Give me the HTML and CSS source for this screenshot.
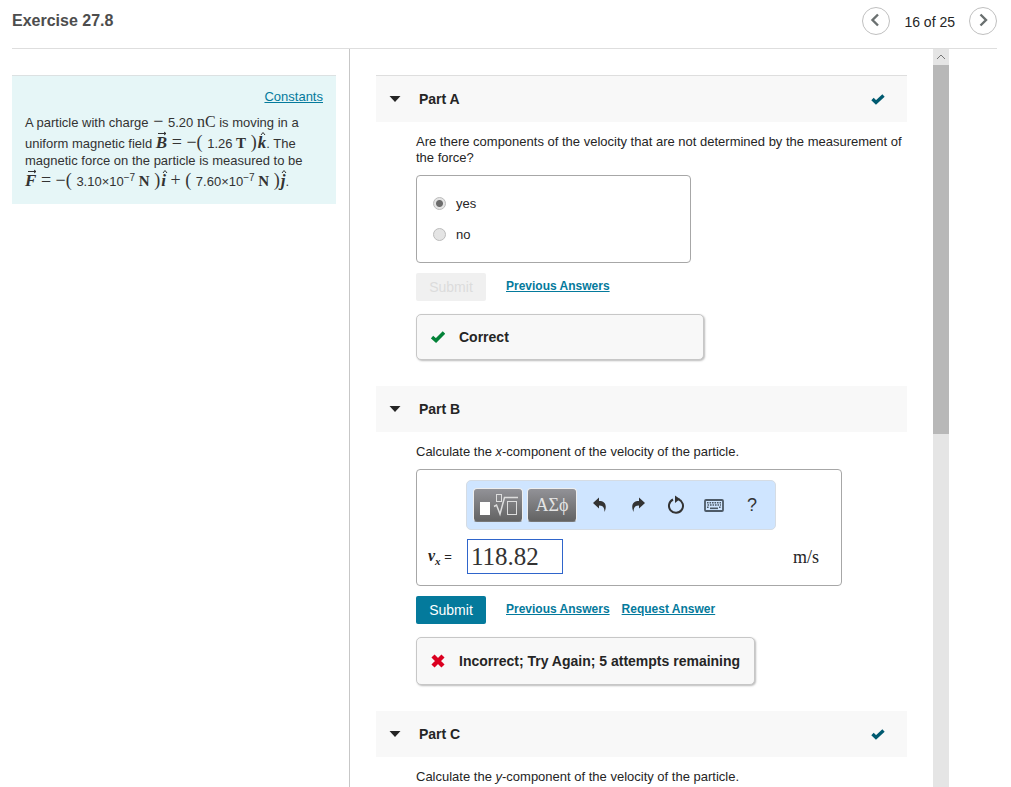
FILE: index.html
```html
<!DOCTYPE html>
<html lang="en">
<head>
  <meta charset="utf-8">
  <title>Exercise 27.8</title>
  <link rel="stylesheet" href="styles.css">
</head>
<body>
  <header class="top-bar">
    <h1>Exercise 27.8</h1>
    <nav class="pager">
      <button class="round" aria-label="Previous item">
        <svg width="28" height="28" viewBox="0 0 28 28"><path d="M16 7.500L10.500 13L16 18.500"/></svg>
      </button>
      <span>16 of 25</span>
      <button class="round" aria-label="Next item">
        <svg width="28" height="28" viewBox="0 0 28 28"><path d="M11.500 7.500L17 13L11.500 18.500"/></svg>
      </button>
    </nav>
  </header>

  <div class="container">
    <aside class="left">
      <div class="problem">
        <a class="constants" href="#">Constants</a>
        <div class="line">A particle with charge <span class="math">&minus;</span> 5.20 <span class="unit">nC</span> is moving in a</div>
        <div class="line tall">uniform magnetic field <span class="vec">B<svg width="10" height="5" viewBox="0 0 10 5"><path d="M1 2.500H9M7 1L9 2.500L7 4"/></svg></span> <span class="math">= &minus;(</span> 1.26 <span class="unit heavy">T</span> <span class="math">)</span><span class="vec">k<svg width="10" height="5" viewBox="0 0 10 5"><path d="M3 4L5 1.500L7 4"/></svg></span>. The</div>
        <div class="line">magnetic force on the particle is measured to be</div>
        <div class="line tall"><span class="vec">F<svg width="10" height="5" viewBox="0 0 10 5"><path d="M1 2.500H9M7 1L9 2.500L7 4"/></svg></span> <span class="math">= &minus;(</span> 3.10&times;10<sup>&minus;7</sup> <span class="unit heavy">N</span> <span class="math">)</span><span class="vec">i<svg width="10" height="5" viewBox="0 0 10 5"><path d="M3 4L5 1.500L7 4"/></svg></span> <span class="math">+ (</span> 7.60&times;10<sup>&minus;7</sup> <span class="unit heavy">N</span> <span class="math">)</span><span class="vec">j<svg width="10" height="5" viewBox="0 0 10 5"><path d="M3 4L5 1.500L7 4"/></svg></span>.</div>
      </div>
    </aside>

    <main class="right">
      <section class="part">
        <div class="part-header first">
          <svg class="caret" width="12" height="6" viewBox="0 0 12 6"><path d="M0.500 0H11.500L6 6Z"/></svg>
          <h2>Part A</h2>
          <svg class="done" width="14" height="11" viewBox="0 0 14 11"><path d="M1.500 5L5 8.500L12.500 1.500"/></svg>
        </div>
        <div class="part-body">
          <p>Are there components of the velocity that are not determined by the measurement of the force?</p>
          <div class="box choices">
            <label><input type="radio" name="partA" checked disabled> yes</label>
            <label><input type="radio" name="partA" disabled> no</label>
          </div>
          <div class="actions">
            <button class="submit" disabled>Submit</button>
            <a href="#">Previous Answers</a>
          </div>
          <div class="feedback correct">
            <svg width="14" height="12" viewBox="0 0 14 12"><path d="M1 6L5 9.500L13 1.500"/></svg>
            <span>Correct</span>
          </div>
        </div>
      </section>

      <section class="part">
        <div class="part-header">
          <svg class="caret" width="12" height="6" viewBox="0 0 12 6"><path d="M0.500 0H11.500L6 6Z"/></svg>
          <h2>Part B</h2>
        </div>
        <div class="part-body">
          <p>Calculate the <i>x</i>-component of the velocity of the particle.</p>
          <div class="box answer">
            <div class="toolbar">
              <button class="key" aria-label="Templates">
                <svg width="40" height="27" viewBox="0 0 40 27" fill="none" stroke="#ddd">
                  <rect x="2" y="10" width="10" height="13" fill="#fff" stroke="none"/>
                  <rect x="18.500" y="2.500" width="5" height="7"/>
                  <path d="M16 14.500L18.500 13L22 22L26.500 5.500H40" stroke-width="1.500"/>
                  <rect x="29.500" y="9.500" width="9" height="13"/>
                </svg>
              </button>
              <button class="key">&Alpha;&Sigma;&#981;</button>
              <button class="tool" aria-label="Undo">
                <svg width="16" height="16" viewBox="0 0 16 16"><path d="M1 6L7 0.500V4C13 4 15.500 8 12.500 15C12.500 10.500 11 8.500 7 8.500V11.500Z"/></svg>
              </button>
              <button class="tool" aria-label="Redo">
                <svg width="16" height="16" viewBox="0 0 16 16"><path d="M15 6L9 0.500V4C3 4 0.500 8 3.500 15C3.500 10.500 5 8.500 9 8.500V11.500Z"/></svg>
              </button>
              <button class="tool" aria-label="Reset">
                <svg width="18" height="20" viewBox="0 0 18 20"><path d="M11.500 4.300A7 7 0 1 1 6 4.500" fill="none" stroke="#333" stroke-width="2"/><path d="M8 0.500L13 4L8 8Z"/></svg>
              </button>
              <button class="tool keyboard" aria-label="Keyboard shortcuts">
                <svg width="20" height="13" viewBox="0 0 20 13" fill="none" stroke="#4d5a67"><rect x="1" y="1" width="18" height="11" rx="1" stroke-width="1.800"/><path d="M3 3.700H17M3.500 6H17M3 8.300H5M15 8.300H17" stroke-width="1.600" stroke-dasharray="1.600 0.900"/><path d="M6 9.300H14" stroke-width="1.600"/></svg>
              </button>
              <button class="tool">?</button>
            </div>
            <div class="entry">
              <label for="vx"><span class="var">v<sub>x</sub></span> =</label>
              <input type="text" id="vx" value="118.82">
              <span class="entry-unit">m/s</span>
            </div>
          </div>
          <div class="actions">
            <button class="submit">Submit</button>
            <a href="#">Previous Answers</a>
            <a href="#">Request Answer</a>
          </div>
          <div class="feedback incorrect">
            <svg width="14" height="14" viewBox="0 0 14 14"><path d="M2 2L12 12M12 2L2 12"/></svg>
            <span>Incorrect; Try Again; 5 attempts remaining</span>
          </div>
        </div>
      </section>

      <section class="part">
        <div class="part-header">
          <svg class="caret" width="12" height="6" viewBox="0 0 12 6"><path d="M0.500 0H11.500L6 6Z"/></svg>
          <h2>Part C</h2>
          <svg class="done" width="14" height="11" viewBox="0 0 14 11"><path d="M1.500 5L5 8.500L12.500 1.500"/></svg>
        </div>
        <div class="part-body">
          <p>Calculate the <i>y</i>-component of the velocity of the particle.</p>
        </div>
      </section>
    </main>

    <div class="scrollbar">
      <svg width="16" height="16" viewBox="0 0 16 16"><path d="M4 10L8 6L12 10"/></svg>
      <div class="thumb"></div>
    </div>
  </div>
</body>
</html>
```
FILE: styles.css
```css
* {
  box-sizing: border-box;
}
body {
  margin: 0;
  height: 100vh;
  display: flex;
  flex-direction: column;
  overflow: hidden;
  font-family: "Liberation Sans", Arial, sans-serif;
  font-size: 13px;
  line-height: 16px;
  color: #252525;
  background-color: #fff;
}
h1, h2, p {
  margin: 0;
}
button {
  padding: 0;
  border: none;
  font-family: inherit;
  cursor: pointer;
}
a {
  color: #047a9c;
}
.top-bar {
  display: flex;
  flex-shrink: 0;
  justify-content: space-between;
  height: 49px;
  margin: 0 14px 0 12px;
  border-bottom: 1px solid #dedede;
}
h1 {
  padding-top: 11px;
  font-size: 16px;
  line-height: 20px;
  color: #4d4d4d;
}
.pager {
  display: flex;
  gap: 14px;
  padding-top: 7px;
  font-size: 14px;
  line-height: 30px;
}
.round {
  width: 28px;
  height: 28px;
  border: 1px solid #c0c0c0;
  border-radius: 50%;
  background-color: #fff;
}
.round svg {
  display: block;
  margin: -1px;
  fill: none;
  stroke: #6a7070;
  stroke-width: 2.4;
}
.container {
  display: flex;
  flex: 1;
  min-height: 0;
  padding-right: 62px;
}
.left {
  width: 350px;
  flex-shrink: 0;
  padding: 26px 13px 0 12px;
  border-right: 1px solid #c7c7c7;
}
.problem {
  padding: 13px;
  border-top: 1px solid #dce1e2;
  color: #333;
  background-color: #e6f6f7;
}
.constants {
  display: block;
  width: fit-content;
  margin: 0 0 10px auto;
}
.line {
  height: 16px;
  white-space: nowrap;
}
.line.tall {
  height: 22px;
  line-height: 26px;
}
.unit, .math, .vec, .var, .entry-unit {
  font-family: "Liberation Serif", serif;
}
.unit, .math, .vec, sup, sub {
  line-height: 0;
}
.unit {
  font-size: 16px;
}
.math {
  padding: 0 1px;
  font-size: 18px;
}
.heavy, .vec {
  font-weight: bold;
}
.heavy {
  font-size: 15px;
}
.vec {
  position: relative;
  font-size: 17px;
  font-style: italic;
}
.vec svg {
  position: absolute;
  left: 50%;
  top: -2px;
  margin-left: -4px;
  fill: none;
  stroke: #333;
}
sup {
  font-size: 10px;
}
.right {
  flex: 1;
  padding: 26px 26px 0;
  overflow: hidden;
}
.part {
  margin-bottom: 26px;
}
.part-header {
  display: flex;
  align-items: center;
  height: 46px;
  padding: 0 22px 0 13px;
  background-color: #f8f8f8;
}
.part-header.first {
  height: 47px;
  border-top: 1px solid #dedede;
}
.caret {
  margin-right: 18px;
  fill: #252525;
}
h2 {
  font-size: 14px;
}
.done {
  margin-left: auto;
  fill: none;
  stroke: #005a70;
  stroke-width: 3.4;
}
.part-body {
  padding: 12px 0 0 40px;
}
.box {
  margin-top: 9px;
  border: 1px solid #a7a7a7;
  border-radius: 4px;
}
.choices {
  display: flex;
  flex-direction: column;
  gap: 14px;
  width: 275px;
  height: 88px;
  padding: 19px 16px;
}
.choices label {
  display: flex;
  align-items: center;
  gap: 10px;
  line-height: 17px;
}
input[type="radio"] {
  appearance: none;
  width: 13px;
  height: 13px;
  margin: 0;
  border: 1px solid #bcbcbc;
  border-radius: 50%;
  background-color: #e4e4e4;
}
input[type="radio"]:checked {
  background-image: radial-gradient(circle, #6c6c6c 3px, transparent 4px);
}
.actions {
  display: flex;
  gap: 12px;
  margin-top: 10px;
  line-height: 26px;
}
.actions a {
  font-size: 12px;
  font-weight: bold;
}
.submit {
  width: 70px;
  height: 28px;
  margin-right: 8px;
  border-radius: 2px;
  font-size: 14px;
  color: #fff;
  background-color: #047a9c;
}
.submit:disabled {
  color: #dcdcdc;
  background-color: #f0f0f0;
}
.feedback {
  display: flex;
  align-items: center;
  width: fit-content;
  margin-top: 13px;
  padding: 0 14px;
  border: 1px solid #c7c7c7;
  border-radius: 5px;
  font-size: 14px;
  font-weight: bold;
  background-color: #f8f8f8;
  box-shadow: 1px 1px 2px #bbb;
}
.feedback svg {
  margin-right: 14px;
  fill: none;
  stroke-width: 3.6;
}
.correct {
  width: 288px;
  height: 46px;
}
.correct svg {
  stroke: #038238;
}
.incorrect {
  height: 48px;
}
.incorrect svg {
  stroke: #db0020;
  stroke-width: 4.4;
}
.answer {
  width: 426px;
  height: 117px;
  padding: 10px 22px 0 11px;
}
.toolbar {
  display: flex;
  align-items: center;
  width: 310px;
  height: 50px;
  margin-left: 38px;
  padding-left: 6px;
  border: 1px solid #d5dce4;
  border-radius: 5px;
  background-color: #cfe5ff;
}
.key {
  width: 50px;
  height: 34px;
  margin-right: 4px;
  border: 1px solid #eee;
  border-bottom-color: #777;
  border-radius: 4px;
  font-family: "Liberation Serif", serif;
  font-size: 18px;
  color: #e4e4e4;
  background: linear-gradient(#929297, #636363);
}
.key svg {
  display: block;
  margin: auto;
}
.tool {
  width: 38px;
  height: 34px;
  font-size: 18px;
  color: #333;
  background: none;
}
.tool svg {
  display: block;
  margin: auto;
  fill: #333;
}
.tool.keyboard svg {
  fill: none;
}
.entry {
  display: flex;
  align-items: center;
  margin-top: 9px;
}
.entry label {
  width: 39px;
}
.var {
  font-size: 16px;
  font-style: italic;
  font-weight: bold;
}
sub {
  font-size: 11px;
}
.entry input {
  width: 96px;
  height: 35px;
  padding: 0 3px;
  border: 1px solid #2f65cb;
  font-family: "Liberation Serif", serif;
  font-size: 25px;
  color: #333;
}
.entry-unit {
  margin-left: auto;
  font-size: 18px;
}
.scrollbar {
  width: 16px;
  background-color: #e5e5e5;
}
.scrollbar svg {
  display: block;
  fill: none;
  stroke: #777;
}
.thumb {
  height: 50%;
  background-color: #b8b8b8;
}
```
